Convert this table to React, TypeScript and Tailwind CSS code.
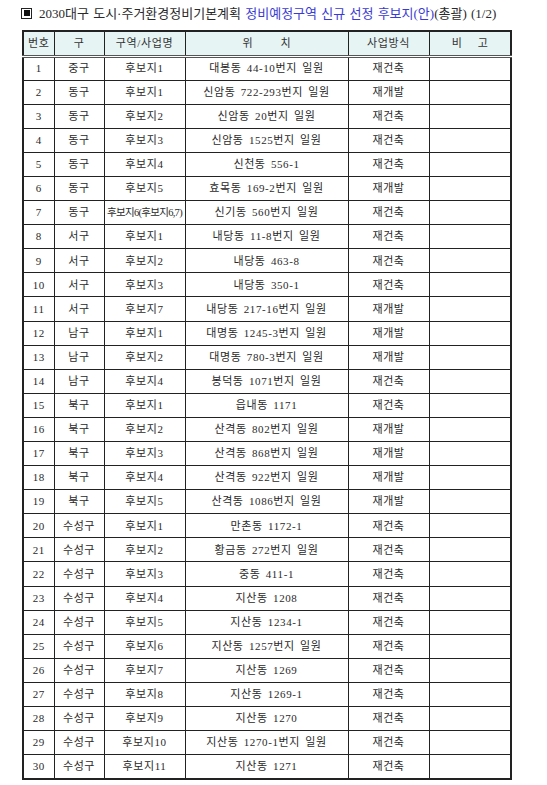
const rows: [string, string, string, string][] = [
  ["중구", "후보지1", "대봉동 44-10번지 일원", "재건축"],
  ["동구", "후보지1", "신암동 722-293번지 일원", "재개발"],
  ["동구", "후보지2", "신암동 20번지 일원", "재건축"],
  ["동구", "후보지3", "신암동 1525번지 일원", "재건축"],
  ["동구", "후보지4", "신천동 556-1", "재건축"],
  ["동구", "후보지5", "효목동 169-2번지 일원", "재개발"],
  ["동구", "후보지6(후보지6,7)", "신기동 560번지 일원", "재건축"],
  ["서구", "후보지1", "내당동 11-8번지 일원", "재건축"],
  ["서구", "후보지2", "내당동 463-8", "재건축"],
  ["서구", "후보지3", "내당동 350-1", "재건축"],
  ["서구", "후보지7", "내당동 217-16번지 일원", "재개발"],
  ["남구", "후보지1", "대명동 1245-3번지 일원", "재개발"],
  ["남구", "후보지2", "대명동 780-3번지 일원", "재개발"],
  ["남구", "후보지4", "봉덕동 1071번지 일원", "재건축"],
  ["북구", "후보지1", "읍내동 1171", "재건축"],
  ["북구", "후보지2", "산격동 802번지 일원", "재개발"],
  ["북구", "후보지3", "산격동 868번지 일원", "재개발"],
  ["북구", "후보지4", "산격동 922번지 일원", "재개발"],
  ["북구", "후보지5", "산격동 1086번지 일원", "재개발"],
  ["수성구", "후보지1", "만촌동 1172-1", "재건축"],
  ["수성구", "후보지2", "황금동 272번지 일원", "재건축"],
  ["수성구", "후보지3", "중동 411-1", "재건축"],
  ["수성구", "후보지4", "지산동 1208", "재건축"],
  ["수성구", "후보지5", "지산동 1234-1", "재건축"],
  ["수성구", "후보지6", "지산동 1257번지 일원", "재건축"],
  ["수성구", "후보지7", "지산동 1269", "재건축"],
  ["수성구", "후보지8", "지산동 1269-1", "재건축"],
  ["수성구", "후보지9", "지산동 1270", "재건축"],
  ["수성구", "후보지10", "지산동 1270-1번지 일원", "재건축"],
  ["수성구", "후보지11", "지산동 1271", "재건축"],
];

const font = "font-['Liberation_Serif','Noto_Sans_CJK_KR',serif]";

export default function App() {
  return (
    <div className={`w-[547px] h-[785px] bg-white text-[#2a2a2a] ${font}`}>
      <div className="flex items-center h-[26px] pl-[21px] text-[13px] leading-none whitespace-nowrap [word-spacing:1px]">
        <span className="mr-[7px] flex h-[11px] w-[11px] items-center justify-center border border-[#222]">
          <span className="h-[6px] w-[6px] bg-[#111]" />
        </span>
        <span>2030대구 도시·주거환경정비기본계획&nbsp;</span>
        <span className="text-[#3a3ad6]">정비예정구역 신규 선정 후보지(안)</span>
        <span>(총괄) (1/2)</span>
      </div>

      <table className="ml-[22px] mt-[4px] w-[488px] table-fixed border-collapse border-2 border-[#222] text-[11px] tracking-[0.6px] [word-spacing:2px]">
        <colgroup>
          <col className="w-[31px]" />
          <col className="w-[50px]" />
          <col className="w-[81px]" />
          <col className="w-[163px]" />
          <col className="w-[81px]" />
          <col className="w-[82px]" />
        </colgroup>
        <thead>
          <tr className="h-[25px] bg-[#e6f4f4] border-b-[3px] border-double border-b-[#555]">
            <th className="border border-[#222] font-normal text-[#333]">번호</th>
            <th className="border border-[#222] font-normal text-[#333]">구</th>
            <th className="border border-[#222] font-normal text-[#333]">구역/사업명</th>
            <th className="border border-[#222] font-normal text-[#333] tracking-[28px] pl-[28px]">위치</th>
            <th className="border border-[#222] font-normal text-[#333]">사업방식</th>
            <th className="border border-[#222] font-normal text-[#333] tracking-[16px] pl-[16px]">비고</th>
          </tr>
        </thead>
        <tbody>
          {rows.map((r, i) => (
            <tr key={i} className="h-[24.1px] text-center">
              <td className="border border-[#222]">{i + 1}</td>
              <td className="border border-[#222]">{r[0]}</td>
              <td className={`border border-[#222] whitespace-nowrap ${r[1].length > 6 ? "tracking-[-0.7px] text-[10.5px]" : ""}`}>{r[1]}</td>
              <td className="border border-[#222] whitespace-nowrap">{r[2]}</td>
              <td className="border border-[#222]">{r[3]}</td>
              <td className="border border-[#222]"></td>
            </tr>
          ))}
        </tbody>
      </table>
    </div>
  );
}
